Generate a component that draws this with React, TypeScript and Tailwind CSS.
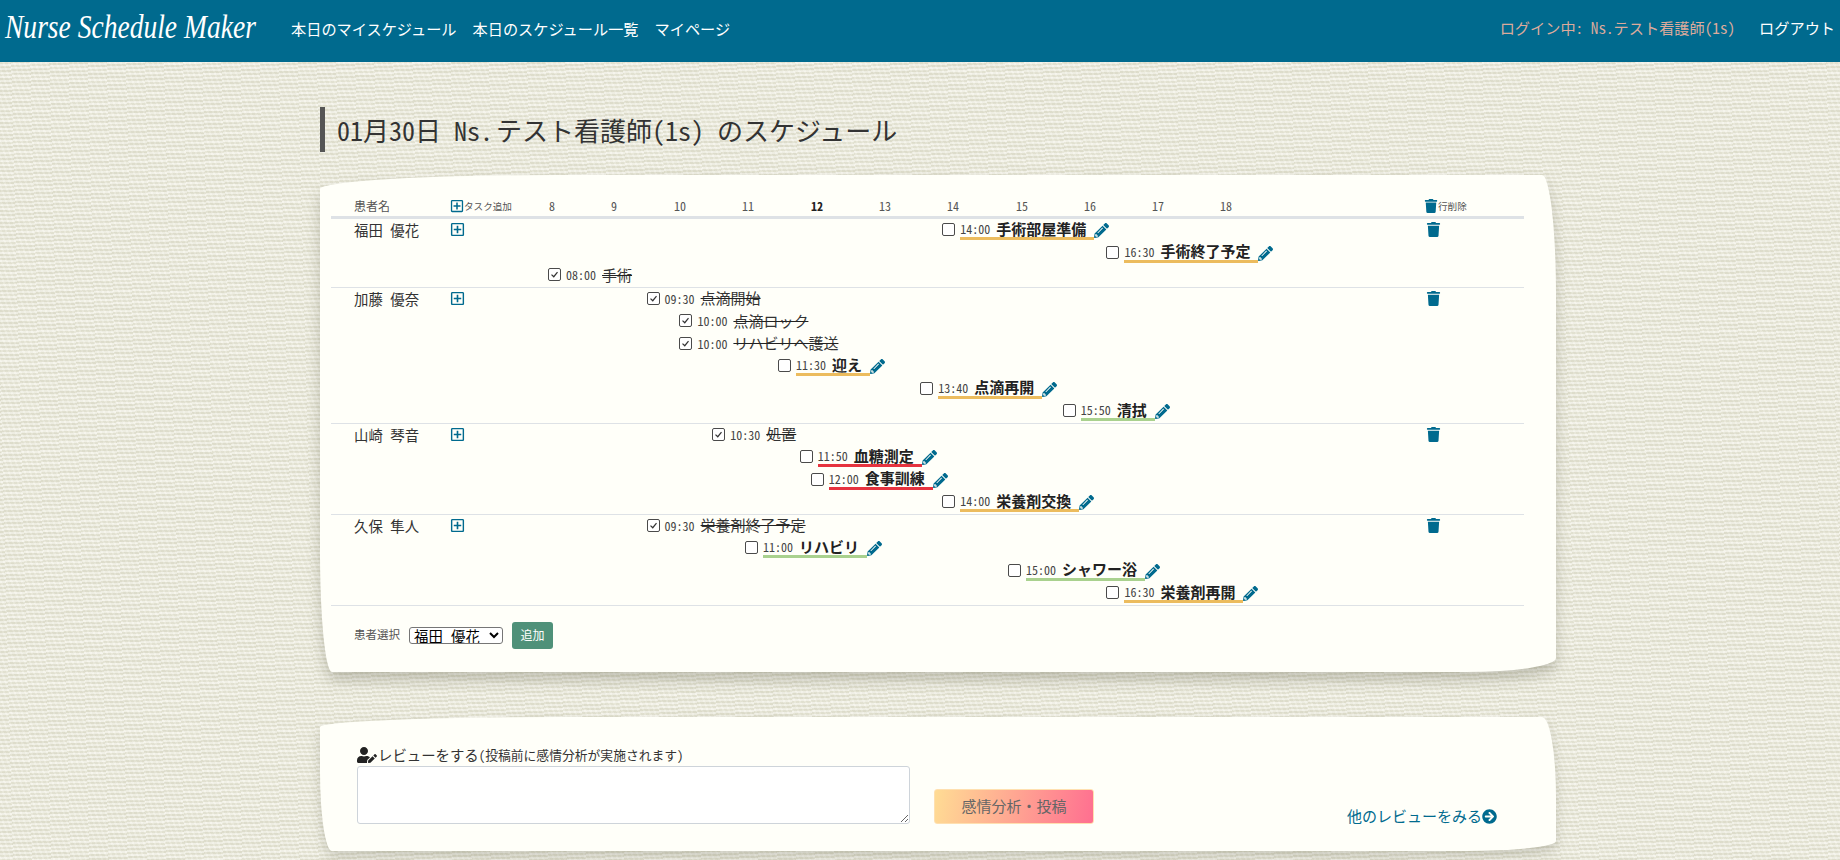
import React from "react";
import { FaPencilAlt, FaTrash, FaRegPlusSquare, FaArrowCircleRight, FaUserEdit } from "react-icons/fa";

type Task = { t: string; name: string; done?: boolean; color?: "y" | "r" | "g" };
type Patient = { name: string; tasks: Task[] };

const patients: Patient[] = [
  { name: "福田 優花", tasks: [
    { t: "14:00", name: "手術部屋準備", color: "y" },
    { t: "16:30", name: "手術終了予定", color: "y" },
    { t: "08:00", name: "手術", done: true },
  ]},
  { name: "加藤 優奈", tasks: [
    { t: "09:30", name: "点滴開始", done: true },
    { t: "10:00", name: "点滴ロック", done: true },
    { t: "10:00", name: "リハビリへ護送", done: true },
    { t: "11:30", name: "迎え", color: "y" },
    { t: "13:40", name: "点滴再開", color: "y" },
    { t: "15:50", name: "清拭", color: "g" },
  ]},
  { name: "山崎 琴音", tasks: [
    { t: "10:30", name: "処置", done: true },
    { t: "11:50", name: "血糖測定", color: "r" },
    { t: "12:00", name: "食事訓練", color: "r" },
    { t: "14:00", name: "栄養剤交換", color: "y" },
  ]},
  { name: "久保 隼人", tasks: [
    { t: "09:30", name: "栄養剤終了予定", done: true },
    { t: "11:00", name: "リハビリ", color: "g" },
    { t: "15:00", name: "シャワー浴", color: "g" },
    { t: "16:30", name: "栄養剤再開", color: "y" },
  ]},
];

const hours: { h: string; w: string; bold?: boolean }[] = [
  { h: "8", w: "w-[62px]" },
  { h: "9", w: "w-[63px]" },
  { h: "10", w: "w-[68px]" },
  { h: "11", w: "w-[69px]" },
  { h: "12", w: "w-[68px]", bold: true },
  { h: "13", w: "w-[68px]" },
  { h: "14", w: "w-[69px]" },
  { h: "15", w: "w-[68px]" },
  { h: "16", w: "w-[68px]" },
  { h: "17", w: "w-[68px]" },
  { h: "18", w: "w-[68px]" },
];

const underline = {
  y: "border-[#ecbc5e]",
  r: "border-[#e6333f]",
  g: "border-[#a9d18e]",
};

const HW = '[font-feature-settings:"hwid"]';

function offset(t: string) {
  const [h, m] = t.split(":").map(Number);
  return (h + m / 60 - 8) * 65.7 - 1;
}

function Check({ on }: { on?: boolean }) {
  return (
    <span className="flex h-[13px] w-[13px] shrink-0 items-center justify-center rounded-[2px] border border-[#4a4a4a] bg-white">
      {on && (
        <svg viewBox="0 0 12 12" className="h-[9px] w-[9px]" fill="none" stroke="#333" strokeWidth="1.6">
          <path d="M2 6.2 L5 9 L10 2.8" />
        </svg>
      )}
    </span>
  );
}

function TaskRow({ task }: { task: Task }) {
  return (
    <div className="flex h-[22.5px] items-start" style={{ marginLeft: offset(task.t) }}>
      <div className="flex h-[20px] items-center pt-[1px]">
        <Check on={task.done} />
      </div>
      {task.done ? (
        <span className="ml-[5px] flex h-[21px] items-center pt-[1px]">
          <span className={`text-[12px] text-[#444] ${HW}`}>{task.t}</span>
          <span className="ml-[6px] text-[15px] text-[#333] line-through decoration-[#222]">{task.name}</span>
        </span>
      ) : (
        <>
          <span className={`ml-[5px] flex h-[21px] items-center border-b-[3px] pr-2 pt-[2px] ${underline[task.color!]}`}>
            <span className={`text-[12px] text-[#444] ${HW}`}>{task.t}</span>
            <span className="ml-[6px] text-[15px] font-bold text-[#222]">{task.name}</span>
          </span>
          <FaPencilAlt className="mt-[4px] text-[15px] text-[#006a8e]" />
        </>
      )}
    </div>
  );
}

export default function App() {
  return (
    <div
      className={`h-[860px] w-full overflow-hidden bg-[#f0efe2] bg-[repeating-linear-gradient(177deg,rgba(255,255,255,0.3)_0px,rgba(255,255,255,0.3)_2px,rgba(150,150,115,0.1)_2px,rgba(150,150,115,0.1)_4px),repeating-linear-gradient(3deg,rgba(255,255,255,0)_0px,rgba(255,255,255,0)_5px,rgba(150,150,115,0.06)_5px,rgba(150,150,115,0.06)_11px),repeating-linear-gradient(70deg,rgba(255,255,255,0.12)_0px,rgba(255,255,255,0.12)_2px,rgba(130,130,95,0.05)_2px,rgba(130,130,95,0.05)_5px)] font-['Noto_Sans_CJK_JP','Noto_Sans',sans-serif] text-[#333]`}
    >
      <header className="flex h-[62px] items-start bg-[#006a8e]">
        <div className="ml-[5px] mt-[8px] w-[286px] origin-left scale-x-[0.81] whitespace-nowrap font-['Liberation_Serif',serif] text-[34px] leading-[38px] text-white italic">
          Nurse Schedule Maker
        </div>
        <nav className="mt-[17px] flex gap-4 text-[15.2px] leading-[22px] text-white">
          <span>本日のマイスケジュール</span>
          <span>本日のスケジュール一覧</span>
          <span>マイページ</span>
        </nav>
        <div className="ml-auto mr-[5px] mt-[16px] flex gap-6 text-[15.2px] leading-[22px]">
          <span className="whitespace-pre text-[#dcaa9c]">
            ログイン中<span className={HW}>: Ns.</span>テスト看護師<span className={HW}>(1s)</span>
          </span>
          <span className="text-white">ログアウト</span>
        </div>
      </header>

      <main className="ml-[320px] w-[1236px]">
        <h1 className="mt-[45px] flex h-[45px] items-center border-l-[5px] border-[#555] pl-3 text-[26px] font-normal text-[#333]">
          <span className="whitespace-pre">
            <span className={HW}>01</span>月<span className={HW}>30</span>日<span className={HW}> Ns.</span>
            <span className="ml-[3px]">テスト看護師</span>
            <span className={HW}>(1s) </span>のスケジュール
          </span>
        </h1>

        <section className="mt-[23px] h-[497px] rounded-[240px_14px_90px_12px/14px_120px_14px_120px] bg-[#fffff9] pl-[11px] pt-[21px] shadow-[0_8px_14px_rgba(90,90,70,0.3)]">
          <div className="w-[1193px]">
            <div className="flex h-[20px] items-center pl-[23px] text-[12px] text-[#555]">
              <span className="w-[97px]">患者名</span>
              <span className="flex w-[98px] items-center text-[9.6px]">
                <FaRegPlusSquare className="-ml-[1px] text-[14px] text-[#006a8e]" />
                タスク追加
              </span>
              {hours.map((x) => (
                <span key={x.h} className={`${x.w} ${x.bold ? "font-bold text-[#222]" : ""} ${HW}`}>
                  {x.h}
                </span>
              ))}
              <span className="ml-[136px] flex items-center text-[9.6px]">
                <FaTrash className="text-[14px] text-[#006a8e]" />
                行削除
              </span>
            </div>
            <div className="h-[3px] bg-[#dee2e6]" />
            {patients.map((p) => (
              <div key={p.name} className="flex border-b border-[#dee2e6] pl-[23px]">
                <div className="w-[97px] pt-[1px] text-[14.4px] leading-[20px] text-[#333] [word-spacing:0.3em]">{p.name}</div>
                <div className="w-[98px] pt-[3px]">
                  <FaRegPlusSquare className="-ml-[1px] text-[15px] text-[#006a8e]" />
                </div>
                <div className="w-[877px]">
                  {p.tasks.map((t, i) => (
                    <TaskRow key={i} task={t} />
                  ))}
                </div>
                <div className="pt-[3px]">
                  <FaTrash className="text-[15px] text-[#006a8e]" />
                </div>
              </div>
            ))}
            <div className="mt-[16px] flex items-center pl-[23px]">
              <span className="text-[11.5px] text-[#555]">患者選択</span>
              <select className="ml-[9px] h-[17px] w-[94px] rounded-[3px] border border-[#767676] bg-white py-0 pl-0 font-['Liberation_Sans','Noto_Sans_CJK_JP',sans-serif] text-[14.4px] leading-[15px] text-black [word-spacing:0.3em]">
                <option>福田 優花</option>
              </select>
              <button className="ml-[9px] h-[27px] w-[41px] rounded-[3px] bg-[#4f9179] text-[12px] text-white">追加</button>
            </div>
          </div>
        </section>

        <section className="mt-[45px] flex h-[134px] items-end rounded-[240px_14px_90px_12px/10px_80px_10px_80px] bg-[#fffff9] pb-[27px] pl-[37px] shadow-[0_6px_12px_rgba(90,90,70,0.25)]">
          <div className="w-[553px]">
            <div className="mb-[2px] flex h-[19px] items-center text-[14.4px] text-[#333]">
              <FaUserEdit className="mr-[1px] text-[20px] text-[#222]" />
              レビューをする
              <span className="text-[12.8px]">
                <span className={HW}>(</span>投稿前に感情分析が実施されます<span className={HW}>)</span>
              </span>
            </div>
            <textarea className="block h-[58px] w-[553px] rounded-[3px] border border-[#ced4da] bg-white" />
          </div>
          <button className="ml-[24px] h-[35px] w-[160px] rounded-[3px] border border-[#ffe0b0] bg-[linear-gradient(100deg,#ffdc94,#ff6f90)] text-[15px] text-[#666]">
            感情分析・投稿
          </button>
          <a className="mb-[-2px] ml-auto mr-[59px] flex items-center text-[15px] leading-[20px] text-[#006a8e]">
            他のレビューをみる
            <FaArrowCircleRight className="text-[15px]" />
          </a>
        </section>
      </main>
    </div>
  );
}
